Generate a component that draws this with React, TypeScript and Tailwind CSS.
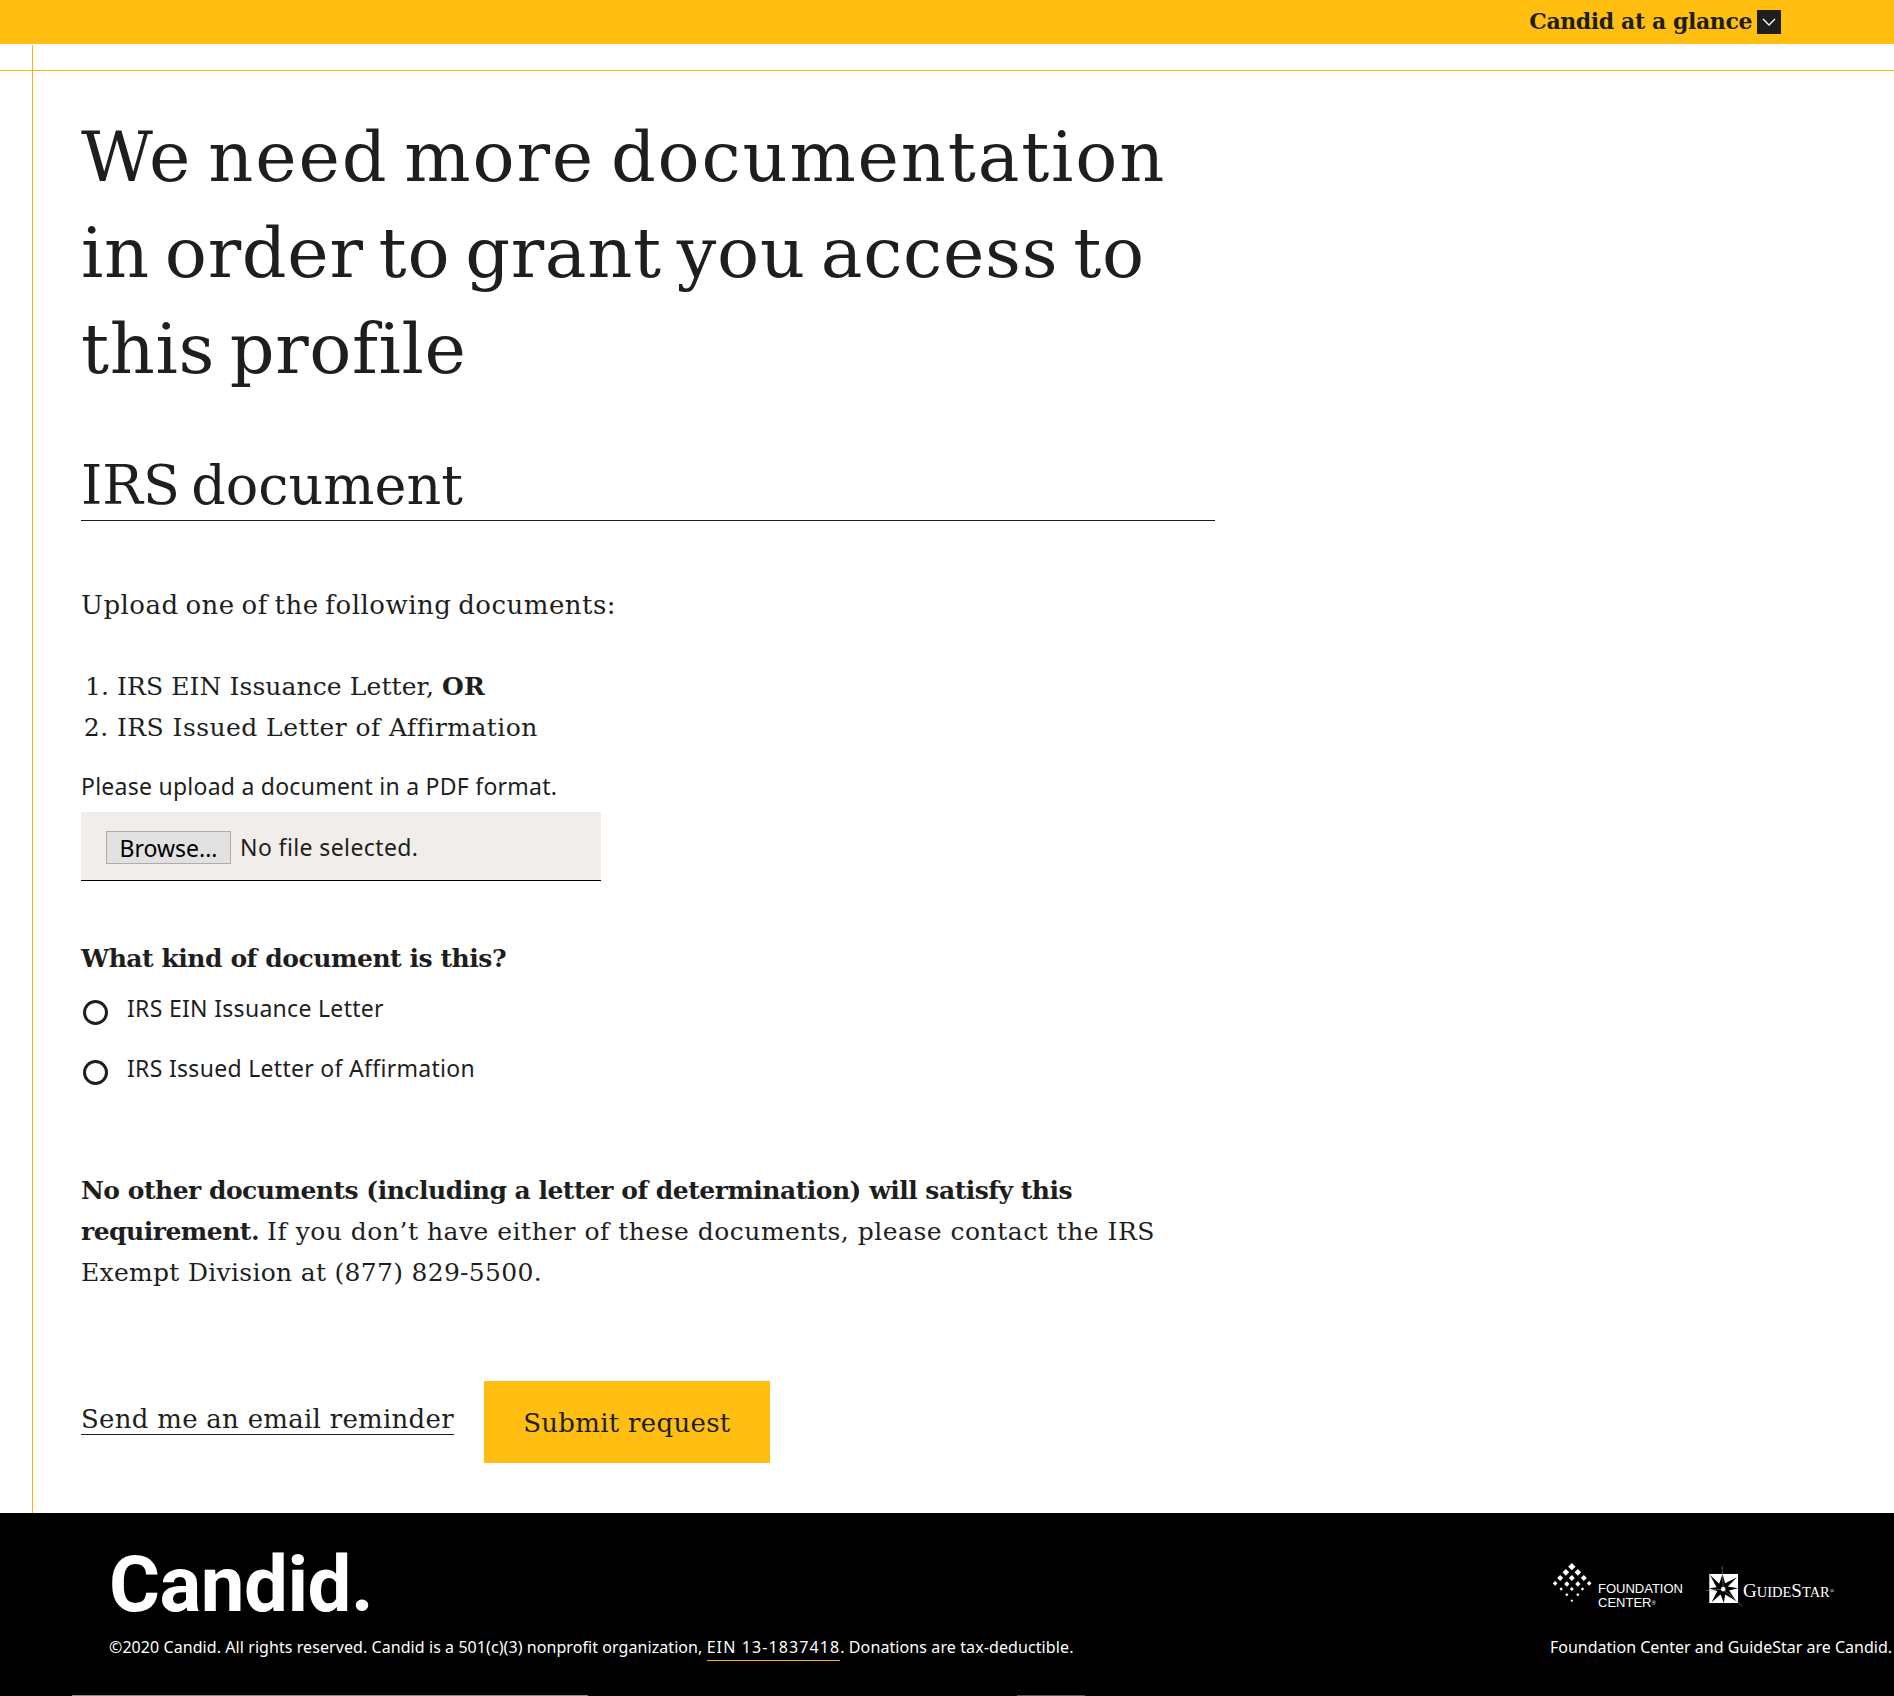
const serif = "font-['DejaVu_Serif',serif]";
const sans = "font-['Noto_Sans',sans-serif]";

const dots: [number, number, number][] = [
  [80, 38, 11], [62, 55, 10], [98, 55, 10], [45, 72, 9], [80, 72, 9], [116, 72, 9],
  [30, 88, 7], [65, 90, 8], [98, 90, 8], [132, 88, 7], [48, 105, 5], [80, 105, 6],
  [112, 105, 5], [65, 122, 5], [98, 122, 5], [80, 140, 4],
];

function FoundationMark() {
  return (
    <svg width="39" height="41" viewBox="24 27 116 123" className="block shrink-0">
      {dots.map(([x, y, r]) => (
        <path key={`${x}-${y}`} d={`M${x} ${y - r}L${x + r} ${y}L${x} ${y + r}L${x - r} ${y}Z`} fill="#fff" />
      ))}
    </svg>
  );
}

function GuideStarMark() {
  return (
    <svg width="38" height="43" viewBox="15 15 115 130" className="block shrink-0">
      <rect x="28" y="42" width="87" height="88" fill="#fff" />
      <path d="M30 45L58 72L68 42L76 70L112 52L84 80L115 85L88 92L110 125L76 104L72 130L62 104L35 128L52 94L28 85L50 82Z" fill="#000" />
      <path d="M67 18L70 88M18 92L70 88M70 88L128 140" stroke="#aaa" strokeWidth="1.500" fill="none" />
      <circle cx="70" cy="88" r="7" fill="#eee" />
    </svg>
  );
}

export default function App() {
  return (
    <div className="w-[1894px] h-[1696px] flex flex-col bg-white text-[#1e1e1e] overflow-hidden">
      <header className="h-[44px] shrink-0 bg-[#ffbe10] flex items-center justify-end pr-[113px]">
        <span className={`${serif} font-bold text-[22px] tracking-[-0.4px] pb-[2px]`}>Candid at a glance</span>
        <span className="ml-[5px] w-6 h-6 bg-[#1e1e1e] flex items-center justify-center">
          <svg width="16" height="10" viewBox="0 0 16 10" fill="none">
            <path d="M2 2l6 6 6-6" stroke="#fff" strokeWidth="1.300" />
          </svg>
        </span>
      </header>

      <div className="ml-[32px] flex-1 border-l border-[#fbb017] mt-[1px]">
        <div className="h-[26px] -ml-[33px] border-b border-[#fbb017]" />
        <main className="pl-[48px] w-[1182px]">
          <h1 className={`${serif} font-normal text-[70px] leading-[96px] [word-spacing:-8px] mt-[38px] w-[1130px] whitespace-nowrap`}>
            <span className="block tracking-[1.8px]">We need more documentation</span>
            <span className="block tracking-[0.7px]">in order to grant you access to</span>
            <span className="block tracking-[0.6px]">this profile</span>
          </h1>
          <h2 className={`${serif} font-normal text-[54px] leading-[64px] [word-spacing:-6px] mt-[57px] pb-[2px] border-b border-[#1e1e1e]`}>
            IRS document
          </h2>
          <p className={`${serif} text-[26px] leading-[41px] tracking-[0.5px] [word-spacing:-2px] mt-[64px]`}>Upload one of the following documents:</p>
          <ol className={`${serif} text-[25px] leading-[41px] mt-[40px] list-decimal pl-[36px]`}>
            <li className="tracking-[0.1px]">IRS EIN Issuance Letter, <b>OR</b></li>
            <li className="tracking-[0.45px]">IRS Issued Letter of Affirmation</li>
          </ol>
          <p className={`${sans} text-[23px] leading-[30px] tracking-[0.25px] mt-[23px]`}>Please upload a document in a PDF format.</p>
          <div className="mt-[11px] w-[520px] h-[69px] bg-[#f0edea] border-b border-black flex items-center pl-[25px] pt-[3px]">
            <button className={`${sans} w-[125px] h-[33px] bg-[#e1e1e1] border border-[#adadad] text-[23px] leading-none text-black pt-[1px]`}>Browse...</button>
            <span className={`${sans} ml-[9px] text-[23px] tracking-[0.4px]`}>No file selected.</span>
          </div>
          <h3 className={`${serif} font-bold text-[25px] leading-[34px] tracking-[-0.45px] mt-[61px]`}>What kind of document is this?</h3>
          <label className={`${sans} flex items-start text-[23px] leading-[30px] tracking-[0.3px] mt-[16px]`}>
            <input type="radio" name="doc" className="appearance-none w-[25px] h-[25px] ml-[2px] mt-[8px] rounded-full border-[3px] border-[#1e1e1e]" />
            <span className="ml-[19px] mt-[1px]">IRS EIN Issuance Letter</span>
          </label>
          <label className={`${sans} flex items-start text-[23px] leading-[30px] tracking-[0.3px] mt-[27px]`}>
            <input type="radio" name="doc" className="appearance-none w-[25px] h-[25px] ml-[2px] mt-[8px] rounded-full border-[3px] border-[#1e1e1e]" />
            <span className="ml-[19px] mt-[1px]">IRS Issued Letter of Affirmation</span>
          </label>
          <p className={`${serif} text-[25px] leading-[41px] mt-[85px] w-[1110px]`}>
            <b className="tracking-[-0.5px]">No other documents (including a letter of determination) will satisfy this requirement.</b>{" "}
            <span className="tracking-[0.5px]">If you don’t have either of these documents, please contact the IRS</span>{" "}
            <span className="tracking-[0.3px]">Exempt Division at (877) 829-5500.</span>
          </p>
          <div className="flex items-center mt-[88px]">
            <a className={`${serif} text-[26px] leading-[30px] tracking-[0.27px] border-b border-[#1e1e1e] mb-[6px]`}>Send me an email reminder</a>
            <button className={`${serif} ml-[30px] w-[286px] h-[82px] bg-[#ffbe10] text-[26px] tracking-[0.3px] pt-[2px]`}>Submit request</button>
          </div>
        </main>
      </div>

      <footer className="h-[183px] shrink-0 bg-black text-white relative flex justify-between">
        <div className="pl-[109px] pt-[27px]">
          <div className="font-['Roboto',sans-serif] font-bold text-[78px] leading-[90px] tracking-[-0.5px]">Candid.</div>
          <p className={`${sans} text-[16px] leading-[24px] tracking-[0.07px] mt-[5px]`}>
            ©2020 Candid. All rights reserved. Candid is a 501(c)(3) nonprofit organization, <a className="border-b border-[#fbb017] pb-[2px] tracking-[1.1px]">EIN 13-1837418</a><span className="tracking-[0.1px]">. Donations are tax-deductible.</span>
          </p>
        </div>
        <div className="w-[344px] pt-[50px]">
          <div className="flex h-[58px] pl-[3px]">
            <FoundationMark />
            <div className="ml-[6px] mt-[19px] font-['Liberation_Sans',sans-serif] text-[13px] leading-[14px]">
              <div>FOUNDATION</div>
              <div>CENTER<span className="text-[6px] align-top">®</span></div>
            </div>
            <div className="ml-[22px] mt-[2px]"><GuideStarMark /></div>
            <div className="mt-[19px] font-['Liberation_Serif',serif] text-[19px] leading-[18px]">G<span className="text-[14.500px]">UIDE</span>S<span className="text-[14.500px]">TAR</span><span className="text-[6px] align-top">®</span></div>
          </div>
          <p className={`${sans} text-[16px] leading-[24px] mt-[14px] whitespace-nowrap`}>Foundation Center and GuideStar are Candid.</p>
        </div>
        <div className="absolute bottom-0 left-[72px] w-[516px] h-px bg-[#8a8a8a]" />
        <div className="absolute bottom-0 left-[1017px] w-[68px] h-px bg-[#555]" />
      </footer>
    </div>
  );
}
